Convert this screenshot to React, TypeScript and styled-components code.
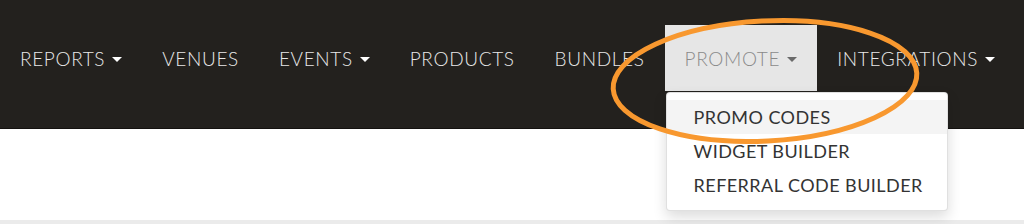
import React from "react";
import styled, { createGlobalStyle } from "styled-components";

const Global = createGlobalStyle`
  html, body { margin: 0; padding: 0; background: #ffffff; }
  body { font-family: Lato, "Open Sans", sans-serif; width: 1024px; height: 224px; overflow: hidden; }
  * { box-sizing: border-box; }
`;

const Page = styled.div`
  position: relative;
  width: 1024px;
  height: 224px;
  display: flex;
  flex-direction: column;
`;

const NavBar = styled.nav`
  height: 129px;
  background: #23211e;
  border-bottom: 1px solid #141210;
  padding: 25px 0 0 0;
`;

const Menu = styled.ul`
  list-style: none;
  margin: 0;
  padding: 0;
  display: flex;
  align-items: stretch;
  height: 66px;
`;

const Item = styled.li<{ $active?: boolean }>`
  position: relative;
  display: flex;
  align-items: center;
  padding: 0 20px;
  background: ${(p) => (p.$active ? "#e6e6e6" : "transparent")};
  color: ${(p) => (p.$active ? "#8a8a8a" : "#e8e8e8")};
  font-size: 19px;
  font-weight: 300;
  letter-spacing: 0.65px;
  text-transform: uppercase;
  white-space: nowrap;
`;

const Caret = styled.span<{ $active?: boolean }>`
  display: inline-block;
  width: 0;
  height: 0;
  margin-left: 7px;
  margin-top: 2px;
  border-left: 5px solid transparent;
  border-right: 5px solid transparent;
  border-top: 5px solid ${(p) => (p.$active ? "#6a6a6a" : "#ffffff")};
`;

const Dropdown = styled.ul`
  position: absolute;
  top: calc(100% + 1px);
  left: 1px;
  width: 282px;
  margin: 0;
  padding: 7px 0 8px;
  list-style: none;
  background: #ffffff;
  border: 1px solid rgba(0, 0, 0, 0.12);
  border-radius: 4px;
  box-shadow: 0 6px 14px rgba(0, 0, 0, 0.14);
  z-index: 2;
`;

const DropItem = styled.li<{ $hover?: boolean }>`
  height: 34px;
  display: flex;
  align-items: center;
  padding: 0 27px;
  background: ${(p) => (p.$hover ? "#f4f4f4" : "transparent")};
  color: #333333;
  font-size: 18px;
  font-weight: 400;
  letter-spacing: 0.45px;
`;

const Body = styled.main`
  flex: 1;
  background: #ffffff;
`;

const FooterStrip = styled.div`
  height: 4px;
  background: #ebebeb;
`;

const Highlight = styled.svg`
  position: absolute;
  left: 0;
  top: 0;
  width: 1024px;
  height: 224px;
  pointer-events: none;
  z-index: 5;
`;

const items: { label: string; caret?: boolean; active?: boolean }[] = [
  { label: "Reports", caret: true },
  { label: "Venues" },
  { label: "Events", caret: true },
  { label: "Products" },
  { label: "Bundles" },
  { label: "Promote", caret: true, active: true },
  { label: "Integrations", caret: true },
];

export default function App() {
  return (
    <>
      <Global />
      <Page>
        <NavBar>
          <Menu>
            {items.map((it) => (
              <Item key={it.label} $active={it.active}>
                {it.label}
                {it.caret && <Caret $active={it.active} />}
                {it.active && (
                  <Dropdown>
                    <DropItem $hover>PROMO CODES</DropItem>
                    <DropItem>WIDGET BUILDER</DropItem>
                    <DropItem>REFERRAL CODE BUILDER</DropItem>
                  </Dropdown>
                )}
              </Item>
            ))}
          </Menu>
        </NavBar>
        <Body />
        <FooterStrip />
        <Highlight viewBox="0 0 1024 224">
          <ellipse
            cx="765"
            cy="81"
            rx="152"
            ry="60"
            transform="rotate(-3 765 81)"
            fill="none"
            stroke="#f8982f"
            strokeWidth="5"
          />
        </Highlight>
      </Page>
    </>
  );
}
